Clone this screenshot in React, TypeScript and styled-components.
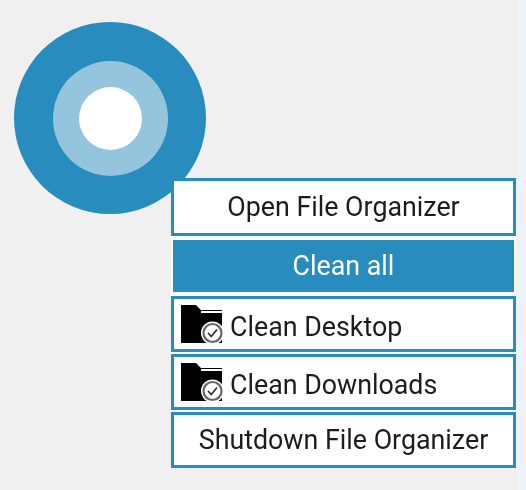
import React from 'react';
import styled, { createGlobalStyle } from 'styled-components';

const accent = '#288cbe';

const GlobalStyle = createGlobalStyle`
  html, body {
    margin: 0;
    padding: 0;
    background: #eef3fa;
  }
  body {
    font-family: Roboto, "Liberation Sans", sans-serif;
  }
`;

const Page = styled.div`
  width: 517px;
  height: 490px;
  box-sizing: border-box;
  padding: 22px 0 0 14px;
  background: #f0f0f0;
  overflow: hidden;
  filter: blur(0.5px);
`;

const Logo = styled.div`
  width: 192px;
  height: 192px;
  border-radius: 50%;
  background: ${accent};
  display: flex;
  align-items: center;
  justify-content: center;
  margin-bottom: -36px;
`;

const LogoRing = styled.div`
  width: 115px;
  height: 115px;
  border-radius: 50%;
  background: #94c5dd;
  display: flex;
  align-items: center;
  justify-content: center;
`;

const LogoCore = styled.div`
  width: 63px;
  height: 63px;
  border-radius: 50%;
  background: #ffffff;
`;

const Menu = styled.div`
  position: relative;
  margin-left: 157px;
  width: 345px;
  display: flex;
  flex-direction: column;
  gap: 2px;
  background: #ffffff;
`;

const MenuItem = styled.div<{ primary?: boolean; tall?: boolean }>`
  box-sizing: border-box;
  height: ${props => (props.tall ? '58px' : '56px')};
  border: ${props => (props.primary ? '2px solid #ffffff' : `3px solid ${accent}`)};
  background: ${props => (props.primary ? accent : '#ffffff')};
  color: ${props => (props.primary ? '#ffffff' : '#1c1c1c')};
  font-size: 26.8px;
  display: flex;
  align-items: center;
  justify-content: center;
  white-space: nowrap;
`;

const IconItem = styled(MenuItem)`
  justify-content: flex-start;
  padding-left: 6px;
  gap: 6px;
`;

const IconLabel = styled.span`
  margin-top: 5px;
`;

const FolderCheck = () => (
  <svg width="44" height="40" viewBox="0 0 44 40">
    <path d="M1 1h15l5 5h21v33H1z" fill="#000" />
    <path d="M21 8h21" stroke="#fff" strokeWidth="2" fill="none" />
    <circle cx="32.500" cy="29" r="11.500" fill="#fff" />
    <circle cx="32.500" cy="29" r="9" fill="#fff" stroke="#666" strokeWidth="2.200" />
    <path d="M28 29l3.300 3.500 5.700-7" stroke="#333" strokeWidth="1.800" fill="none" />
  </svg>
);

export default function App() {
  return (
    <>
      <GlobalStyle />
      <Page>
        <Logo>
          <LogoRing>
            <LogoCore />
          </LogoRing>
        </Logo>
        <Menu>
          <MenuItem tall>Open File Organizer</MenuItem>
          <MenuItem primary>Clean all</MenuItem>
          <IconItem>
            <FolderCheck />
            <IconLabel>Clean Desktop</IconLabel>
          </IconItem>
          <IconItem>
            <FolderCheck />
            <IconLabel>Clean Downloads</IconLabel>
          </IconItem>
          <MenuItem>Shutdown File Organizer</MenuItem>
        </Menu>
      </Page>
    </>
  );
}
